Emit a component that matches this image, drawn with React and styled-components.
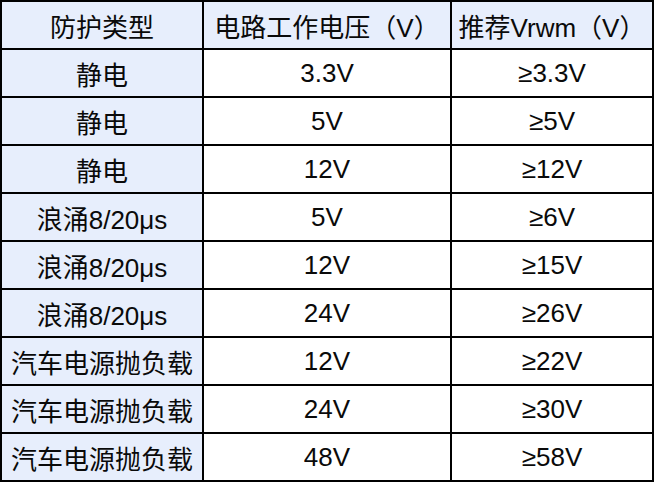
import React from "react";
import styled, { createGlobalStyle } from "styled-components";

const Global = createGlobalStyle`
  html, body { margin: 0; padding: 0; background: #ffffff; }
  body { font-family: "Liberation Sans", "Noto Sans CJK SC", sans-serif; }
`;

const Table = styled.div`
  display: grid;
  grid-template-columns: 200px 246px 200px;
  grid-auto-rows: 46px;
  gap: 2px;
  padding: 2px;
  background: #000000;
  width: 650px;
`;

const Cell = styled.div`
  display: flex;
  align-items: center;
  justify-content: center;
  background: ${(p) => (p.$shaded ? "#e7eefc" : "#ffffff")};
  color: #0a0a0a;
  font-family: "Liberation Sans", "Noto Sans CJK SC", sans-serif;
  font-size: 26px;
  white-space: nowrap;
  overflow: visible;
  letter-spacing: 0;
`;

const header = ["防护类型", "电路工作电压（V）", "推荐Vrwm（V）"];

const rows = [
  ["静电", "3.3V", "≥3.3V"],
  ["静电", "5V", "≥5V"],
  ["静电", "12V", "≥12V"],
  ["浪涌8/20μs", "5V", "≥6V"],
  ["浪涌8/20μs", "12V", "≥15V"],
  ["浪涌8/20μs", "24V", "≥26V"],
  ["汽车电源抛负载", "12V", "≥22V"],
  ["汽车电源抛负载", "24V", "≥30V"],
  ["汽车电源抛负载", "48V", "≥58V"],
];

export default function App() {
  return (
    <>
      <Global />
      <Table>
        {header.map((h) => (
          <Cell key={h} $shaded>
            {h}
          </Cell>
        ))}
        {rows.map((r, i) => (
          <React.Fragment key={i}>
            <Cell $shaded>{r[0]}</Cell>
            <Cell>{r[1]}</Cell>
            <Cell>{r[2]}</Cell>
          </React.Fragment>
        ))}
      </Table>
    </>
  );
}
